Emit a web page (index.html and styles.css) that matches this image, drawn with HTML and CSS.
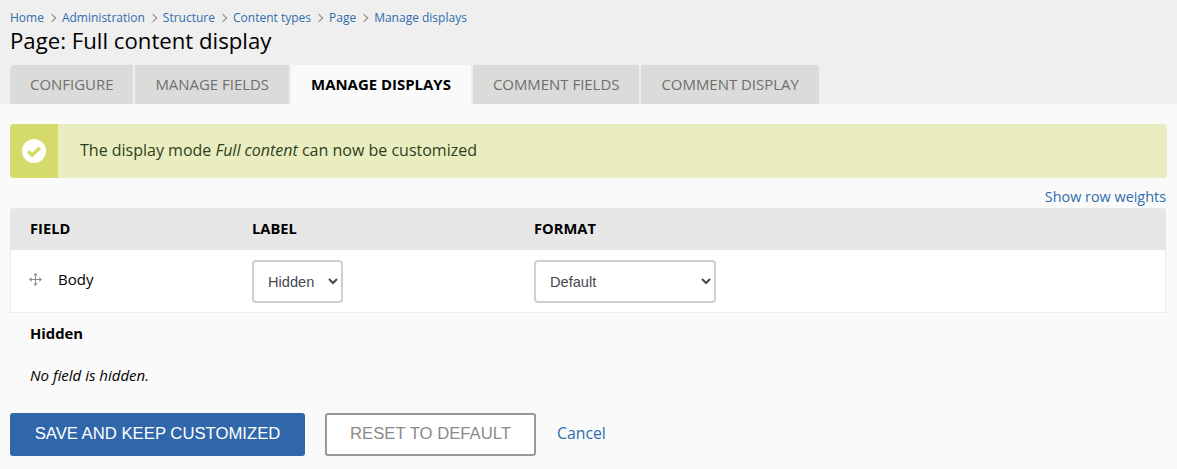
FILE: index.html
```html
<!DOCTYPE html>
<html lang="en">
<head>
    <meta charset="UTF-8">
    <title>Page: Full content display</title>
    <link rel="stylesheet" href="styles.css">
</head>
<body>

<div class="header">
    <ol class="breadcrumb">
        <li><a href="#">Home</a></li>
        <li><a href="#">Administration</a></li>
        <li><a href="#">Structure</a></li>
        <li><a href="#">Content types</a></li>
        <li><a href="#">Page</a></li>
        <li><a href="#">Manage displays</a></li>
    </ol>
    <h1>Page: Full content display</h1>
    <ul class="tabs">
        <li><a href="#">Configure</a></li>
        <li><a href="#">Manage fields</a></li>
        <li class="active"><a href="#">Manage displays</a></li>
        <li><a href="#">Comment fields</a></li>
        <li><a href="#">Comment display</a></li>
    </ul>
</div>

<div class="content">
    <div class="message">
        <div class="message-icon">
            <svg width="24" height="24" viewBox="0 0 24 24">
                <circle cx="12" cy="12" r="12" fill="#fff"/>
                <path d="M6.200 12.200l4 4 7.600-7.400" fill="none" stroke="#d5db6b" stroke-width="3.600"/>
            </svg>
        </div>
        <div class="message-text">The display mode <em>Full content</em> can now be customized</div>
    </div>

    <div class="weights"><a href="#">Show row weights</a></div>

    <div class="fields">
        <div class="row head">
            <div class="col-field">Field</div>
            <div class="col-label">Label</div>
            <div class="col-format">Format</div>
        </div>
        <div class="row body-row">
            <div class="col-field">
                <svg class="drag" width="13" height="13" viewBox="0 0 12 12">
                    <path d="M6 0l2 2.400H4zM6 12l2-2.400H4zM0 6l2.400-2v4zM12 6L9.600 4v4z" fill="#8a8a8a"/>
                    <path d="M6 2v8M2 6h8" stroke="#8a8a8a" stroke-width="1"/>
                </svg>
                <span>Body</span>
            </div>
            <div class="col-label">
                <select class="select-label"><option>Hidden</option></select>
            </div>
            <div class="col-format">
                <select class="select-format"><option>Default</option></select>
            </div>
        </div>
    </div>

    <div class="hidden-title">Hidden</div>
    <div class="hidden-note">No field is hidden.</div>

    <div class="actions">
        <button class="btn-primary">Save and keep customized</button>
        <button class="btn-secondary">Reset to default</button>
        <a href="#" class="cancel">Cancel</a>
    </div>
</div>

</body>
</html>
```

FILE: styles.css
```css
* {
    box-sizing: border-box;
}
body {
    margin: 0;
    font-family: "Open Sans", sans-serif;
    font-size: 15px;
    color: #000;
    background-color: #fafafa;
}
a {
    color: #2e6dae;
    text-decoration: none;
}
.header {
    height: 104px;
    padding: 10px 10px 0;
    background-color: #efefef;
}
.breadcrumb {
    display: flex;
    height: 17px;
    margin: 0;
    padding: 0;
    list-style: none;
    font-size: 12px;
    line-height: 15px;
}
.breadcrumb li + li::before {
    content: "";
    display: inline-block;
    width: 5px;
    height: 5px;
    margin: 0 7px 1px 5px;
    border-top: 1px solid #888;
    border-right: 1px solid #888;
    transform: rotate(45deg);
}
h1 {
    height: 38px;
    margin: 0;
    font-size: 22.2px;
    font-weight: 400;
    line-height: 28px;
}
.tabs {
    display: flex;
    gap: 2px;
    margin: 0;
    padding: 0;
    list-style: none;
}
.tabs li {
    height: 39px;
    background-color: #dbdbda;
}
.tabs li:first-child {
    border-top-left-radius: 4px;
}
.tabs li:last-child {
    border-top-right-radius: 4px;
}
.tabs a {
    display: block;
    padding: 0 20px;
    color: #6f6f6f;
    font-size: 14.95px;
    line-height: 39px;
    text-transform: uppercase;
}
.tabs .active {
    background-color: #fafafa;
}
.tabs .active a {
    color: #000;
    font-weight: 700;
}
.content {
    padding: 20px 10px 0;
}
.message {
    display: flex;
    align-items: center;
    height: 54px;
    color: #2f3f1c;
    font-size: 16px;
    background-color: #e9edc0;
    border-radius: 4px;
    overflow: hidden;
}
.message-icon {
    display: flex;
    align-items: center;
    justify-content: center;
    width: 48px;
    height: 100%;
    background-color: #d5db6b;
}
.message-text {
    padding-left: 22px;
    margin-top: -2px;
}
.weights {
    height: 30px;
    padding-right: 1px;
    font-size: 14.4px;
    line-height: 38px;
    text-align: right;
}
.fields {
    margin-right: 1px;
    border-right: 1px solid #ececec;
    border-bottom: 1px solid #ececec;
    border-left: 1px solid #ececec;
    border-radius: 4px 4px 0 0;
    background-color: #fff;
}
.row {
    display: flex;
}
.head {
    align-items: center;
    height: 42px;
    margin: 0 -1px;
    padding-bottom: 2px;
    font-size: 14.7px;
    font-weight: 700;
    text-transform: uppercase;
    background-color: #e7e7e7;
    border-radius: 4px 4px 0 0;
}
.body-row {
    height: 62px;
    padding-top: 10px;
}
.col-field {
    width: 242px;
    padding-left: 20px;
}
.col-label {
    width: 282px;
}
.head .col-field {
    padding-left: 20px;
}
.body-row .col-field {
    display: flex;
    align-items: center;
    height: 38px;
    padding-left: 18px;
}
.body-row .col-label {
    margin-left: -1px;
}
.drag {
    margin-right: 16px;
}
select {
    height: 43px;
    padding: 0 0 0 10px;
    color: #46484d;
    font-family: "Liberation Sans", sans-serif;
    font-size: 14.6px;
    background-color: #fff;
    border: 2px solid #cfcfcf;
    border-radius: 4px;
}
.select-label {
    width: 91px;
}
.select-format {
    width: 182px;
}
.hidden-title {
    height: 42px;
    padding: 11px 0 0 20px;
    font-size: 14.8px;
    font-weight: 700;
    line-height: 19px;
}
.hidden-note {
    height: 58px;
    padding: 11px 0 0 20px;
    font-style: italic;
    line-height: 19px;
}
.actions {
    display: flex;
    align-items: center;
}
.actions button {
    height: 43px;
    padding: 0 0 2px;
    font-family: "Liberation Sans", sans-serif;
    font-size: 16.7px;
    text-transform: uppercase;
    border-radius: 3px;
    cursor: pointer;
}
.btn-primary {
    width: 295px;
    color: #fff;
    background-color: #2f67aa;
    border: none;
}
.btn-secondary {
    width: 211px;
    margin-left: 20px;
    color: #8a8a8c;
    background-color: #fff;
    border: 2px solid #98989a;
}
.cancel {
    margin-left: 21px;
    margin-top: -4px;
    font-size: 15.8px;
}
```
